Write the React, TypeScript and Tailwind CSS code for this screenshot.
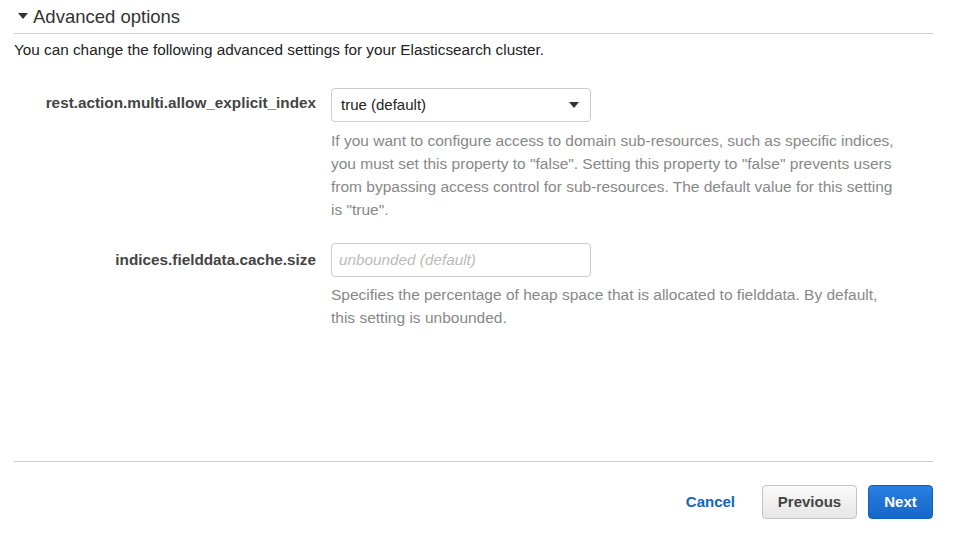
export default function App() {
  return (
    <div className="w-[960px] h-[537px] bg-white text-[#222] overflow-hidden" style={{ fontFamily: '"Liberation Sans", Arial, sans-serif' }}>
      <div className="px-[14px]">
        {/* Section header */}
        <div className="flex items-center h-[34px] border-b border-[#cccccc] w-[919px]">
          <svg width="10" height="6" viewBox="0 0 10 6" className="ml-[4px] mr-[5px] mt-[-2px]">
            <path d="M0 0h10L5 6z" fill="#333" />
          </svg>
          <span className="text-[18.5px] text-[#333]">Advanced options</span>
        </div>
        <p className="text-[15.3px] mt-[7px] leading-[18px] text-[#222]">
          You can change the following advanced settings for your Elasticsearch cluster.
        </p>

        {/* Settings */}
        <div className="mt-[29px] flex flex-col gap-[22px]">
          <div className="flex">
            <div className="w-[302px] h-[34px] flex items-center justify-end text-[15.3px] font-bold text-[#444] pb-[3px]">
              rest.action.multi.allow_explicit_index
            </div>
            <div className="ml-[15px] w-[568px]">
              <div className="w-[260px] h-[34px] border border-[#cccccc] rounded-[4px] flex items-center justify-between px-[9px] text-[15px] text-[#222]">
                <span>true (default)</span>
                <svg width="10" height="6" viewBox="0 0 10 6" className="mr-[2px]">
                  <path d="M0 0h10L5 6z" fill="#333" />
                </svg>
              </div>
              <p className="mt-[7px] text-[15.5px] leading-[23px] text-[#888]">
                If you want to configure access to domain sub-resources, such as specific indices, you must set this property to "false". Setting this property to "false" prevents users from bypassing access control for sub-resources. The default value for this setting is "true".
              </p>
            </div>
          </div>

          <div className="flex">
            <div className="w-[302px] h-[34px] flex items-center justify-end text-[15.3px] font-bold text-[#444]">
              indices.fielddata.cache.size
            </div>
            <div className="ml-[15px] w-[568px]">
              <div className="w-[260px] h-[34px] border border-[#cccccc] rounded-[4px] flex items-center px-[7px] text-[15.3px] italic text-[#bbbbbb]">
                unbounded (default)
              </div>
              <p className="mt-[6px] text-[15.5px] leading-[23px] text-[#888]">
                Specifies the percentage of heap space that is allocated to fielddata. By default, this setting is unbounded.
              </p>
            </div>
          </div>
        </div>

        {/* Footer */}
        <div className="w-[919px] border-t border-[#cccccc] mt-[132px] pt-[23px] flex justify-end items-center">
          <button className="text-[15px] font-bold text-[#1166bb] mr-[27px]">Cancel</button>
          <button className="h-[34px] w-[95px] rounded-[4px] border border-[#c4c4c4] bg-gradient-to-b from-[#fafafa] to-[#e6e6e6] text-[15px] font-bold text-[#444] mr-[11px]">
            Previous
          </button>
          <button className="h-[34px] w-[65px] rounded-[4px] border border-[#1060b8] bg-gradient-to-b from-[#2a7fe0] to-[#1566c8] text-[15px] font-bold text-white">
            Next
          </button>
        </div>
      </div>
    </div>
  );
}
